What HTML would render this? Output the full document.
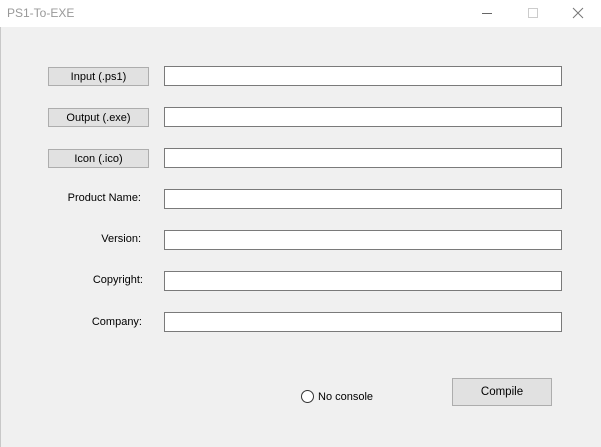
<!DOCTYPE html>
<html><head><meta charset="utf-8"><style>
*{margin:0;padding:0;box-sizing:border-box}
body{width:601px;height:447px;background:#f0f0f0;font-family:"Liberation Sans",sans-serif;font-size:11px;color:#000;position:relative;overflow:hidden}
.tb{position:absolute;left:0;top:0;width:601px;height:27px;background:#fff}
.title{position:absolute;left:7px;top:6px;font-size:12px;color:#999}
.edge{position:absolute;left:0;top:27px;width:1px;height:420px;background:#c8c8c8}
.btn{position:absolute;left:48px;width:101px;height:19px;background:#e1e1e1;border:1px solid #adadad;text-align:center;line-height:19px}
.box{position:absolute;left:164px;width:398px;height:20px;background:#fff;border:1px solid #7a7a7a}
.lbl{position:absolute;right:460px;text-align:right;white-space:nowrap}
.cmp{position:absolute;left:452px;top:378px;width:100px;height:28px;background:#e1e1e1;border:1px solid #adadad;text-align:center;line-height:26px;font-size:11.5px}
.radio{position:absolute;left:301px;top:390px;width:13px;height:13px;border:1px solid #333;border-radius:50%;background:#fff}
</style></head><body>
<div class="tb"><span class="title">PS1-To-EXE</span>
<svg width="601" height="27" style="position:absolute;left:0;top:0">
<line x1="482" y1="13.5" x2="492" y2="13.5" stroke="#666" stroke-width="1"/>
<rect x="528.5" y="8.5" width="9" height="9" fill="none" stroke="#ccc"/>
<path d="M573 8L583 18M583 8L573 18" stroke="#777" stroke-width="1"/>
</svg></div>
<div class="edge"></div>
<div class="btn" style="top:67px">Input (.ps1)</div>
<div class="btn" style="top:108px">Output (.exe)</div>
<div class="btn" style="top:149px">Icon (.ico)</div>
<div class="box" style="top:66px"></div>
<div class="box" style="top:107px"></div>
<div class="box" style="top:148px"></div>
<div class="box" style="top:189px"></div>
<div class="box" style="top:230px"></div>
<div class="box" style="top:271px"></div>
<div class="box" style="top:312px"></div>
<div class="lbl" style="top:192px">Product Name:</div>
<div class="lbl" style="top:233px">Version:</div>
<div class="lbl" style="top:274px;right:458px">Copyright:</div>
<div class="lbl" style="top:316px;right:459px">Company:</div>
<div class="radio"></div>
<div style="position:absolute;left:318px;top:391px">No console</div>
<div class="cmp">Compile</div>
</body></html>
